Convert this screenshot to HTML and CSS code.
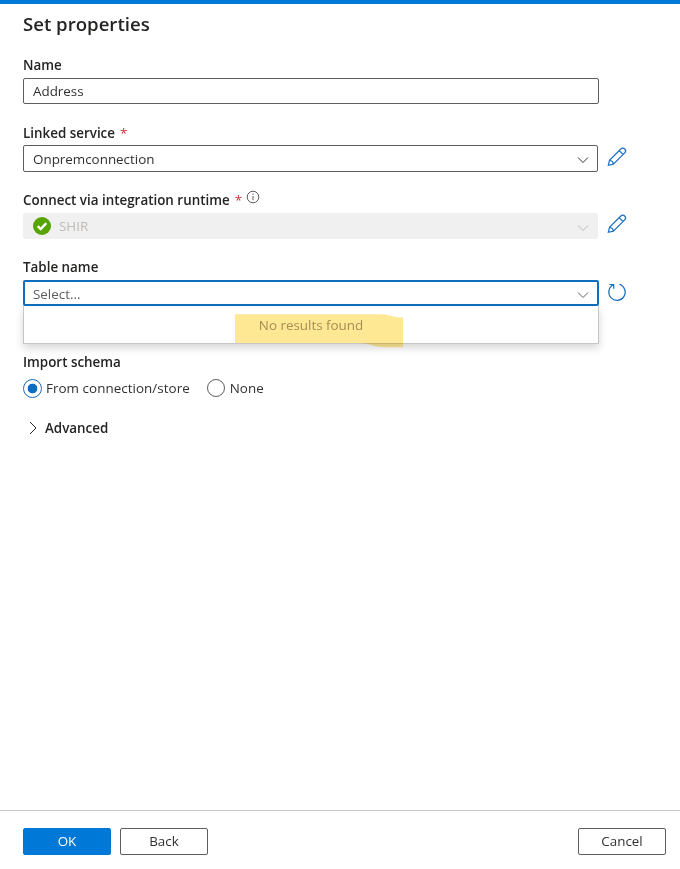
FILE: index.html
```
<!DOCTYPE html>
<html lang="en">
<head>
  <meta charset="UTF-8" />
  <meta name="viewport" content="width=device-width, initial-scale=1.0" />
  <title>Set properties</title>
  <link rel="stylesheet" href="styles.css">
</head>
<body>
  <div class="panel">
    <form class="content">
      <h2>Set properties</h2>

      <div class="field field-name">
        <label class="label">Name</label>
        <div class="row">
          <div class="box box-wide">Address</div>
        </div>
      </div>

      <div class="field field-service">
        <label class="label"><span>Linked service</span><span class="required">*</span></label>
        <div class="row">
          <div class="box">
            <span>Onpremconnection</span>
            <svg class="chevron" viewBox="0 0 12 8"><path d="M1 1.5l5 5 5-5" /></svg>
          </div>
          <svg class="icon" viewBox="0 0 20 20"><path d="M1.3 18.3l1.2-5L13.8 2a2.7 2.7 0 0 1 3.9 3.9L6.4 17.1zM2.5 13.3c2 .1 3.8 1.8 3.9 3.8M12.2 3.6l3.9 3.9" /></svg>
        </div>
      </div>

      <div class="field field-runtime">
        <label class="label">
          <span>Connect via integration runtime</span><span class="required">*</span>
          <svg class="info" viewBox="0 0 14 14"><circle cx="7" cy="7" r="5.8" /><path d="M7 6v4.2M7 3.6v1.2" /></svg>
        </label>
        <div class="row">
          <div class="box disabled">
            <svg class="check" viewBox="0 0 18 18"><circle cx="9" cy="9" r="9" /><path d="M4.7 9.1l3 3 5.6-6" /></svg>
            <span>SHIR</span>
            <svg class="chevron" viewBox="0 0 12 8"><path d="M1 1.5l5 5 5-5" /></svg>
          </div>
          <svg class="icon" viewBox="0 0 20 20"><path d="M1.3 18.3l1.2-5L13.8 2a2.7 2.7 0 0 1 3.9 3.9L6.4 17.1zM2.5 13.3c2 .1 3.8 1.8 3.9 3.8M12.2 3.6l3.9 3.9" /></svg>
        </div>
      </div>

      <div class="field field-table">
        <label class="label">Table name</label>
        <div class="row">
          <div class="box box-wide focused">
            <span>Select...</span>
            <svg class="chevron" viewBox="0 0 12 8"><path d="M1 1.5l5 5 5-5" /></svg>
          </div>
          <svg class="icon refresh" viewBox="0 0 20 20"><path d="M12.4 2.3a8.2 8.2 0 1 1-6.6.8M2.4 2.5h4.3v4.2" /></svg>
          <div class="dropdown">
            <span>No results found</span>
            <svg class="marker" viewBox="0 0 170 36"><path d="M1 1.2h146c9 .2 11 3.3 22 3.3v29.7h-20c-11-.6-12-4-24-4.2H1z" /></svg>
          </div>
        </div>
      </div>

      <div class="label">Import schema</div>
      <div class="radios">
        <span class="radio selected"></span>
        <span class="option">From connection/store</span>
        <span class="radio"></span>
        <span class="option">None</span>
      </div>

      <div class="advanced">
        <svg class="expand" viewBox="0 0 8 14"><path d="M1 1l6 6-6 6" /></svg>
        <span>Advanced</span>
      </div>
    </form>

    <div class="footer">
      <button class="primary">OK</button>
      <button>Back</button>
      <button class="cancel">Cancel</button>
    </div>
  </div>
</body>
</html>
```
FILE: styles.css
```
* {
  box-sizing: border-box;
}
body {
  margin: 0;
  background: #fff;
  color: #323130;
  font-family: "Open Sans", "Noto Sans", sans-serif;
  font-size: 13.4px;
  line-height: 20px;
}
span {
  white-space: nowrap;
}
svg {
  flex: none;
  fill: none;
  stroke: currentColor;
}
.panel {
  display: flex;
  flex-direction: column;
  height: 869px;
  border-top: 4px solid #0078d7;
}
.content {
  flex: 1;
  padding: 6px 23px 0;
}
h2 {
  height: 28px;
  margin: 0 0 17px;
  color: #252423;
  font-size: 18.6px;
  font-weight: 600;
  line-height: 28px;
}
.label {
  display: flex;
  height: 20px;
  color: #252423;
  font-weight: 600;
}
.field {
  display: flex;
  flex-direction: column;
  gap: 3px;
  margin-bottom: 18px;
}
.field-name {
  margin-bottom: 19px;
}
.field-service {
  gap: 2px;
}
.field-table {
  margin-bottom: 46px;
}
.required {
  margin-left: 5px;
  color: #d13438;
  font-weight: 400;
}
.info {
  width: 14px;
  height: 14px;
  margin-left: 4px;
  stroke: #605e5c;
}
.row {
  position: relative;
  display: flex;
}
.box {
  display: flex;
  align-items: center;
  width: 575px;
  height: 26px;
  padding: 0 8px 0 9px;
  border: 1px solid #605e5c;
  border-radius: 2px;
}
.box-wide {
  width: 576px;
}
.field-service .box {
  height: 27px;
}
.disabled {
  border-color: #f0f0f0;
  background: #f0f0f0;
  color: #bebbb8;
}
.focused {
  padding: 2px 8px 0;
  border: 2px solid #106ebe;
  color: #605e5c;
}
.chevron {
  width: 12px;
  height: 8px;
  margin: 3px 0 0 auto;
}
.focused .chevron {
  margin-top: 1px;
}
.check {
  width: 18px;
  height: 18px;
  margin-right: 8px;
}
.check circle {
  fill: #57a300;
  stroke: none;
}
.check path {
  stroke: #fff;
  stroke-width: 2.3;
}
.icon {
  width: 20px;
  height: 20px;
  margin: 2px 0 0 9px;
  color: #1b6ec2;
  stroke-width: 1.2;
}
.field-runtime .icon {
  margin-top: 1px;
}
.row .refresh {
  margin: 2px 0 0 8px;
}
.dropdown {
  position: absolute;
  top: 26px;
  left: 0;
  width: 576px;
  height: 38px;
  padding-top: 9px;
  border: 1px solid #c8c6c4;
  border-top: 0;
  background: #fff;
  box-shadow: 0 4px 8px rgba(0, 0, 0, 0.16);
  color: #a19d90;
  text-align: center;
}
.marker {
  position: absolute;
  top: 7px;
  left: 210px;
  width: 170px;
  height: 36px;
  fill: #ffe893;
  stroke: none;
  mix-blend-mode: multiply;
}
.radios {
  display: flex;
  align-items: center;
  height: 20px;
  margin-top: 6px;
}
.radio {
  width: 18px;
  height: 18px;
  margin-right: 5px;
  border: 1px solid #605e5c;
  border-radius: 50%;
}
.selected {
  width: 19px;
  height: 19px;
  margin-right: 4px;
  border-color: #106ebe;
  background: radial-gradient(circle, #106ebe 4.5px, transparent 5.2px);
}
.option {
  margin-right: 17px;
  letter-spacing: 0.05px;
}
.advanced {
  display: flex;
  align-items: center;
  height: 20px;
  margin: 20px 0 0 6px;
  color: #252423;
  font-weight: 600;
}
.expand {
  width: 8px;
  height: 14px;
  margin-right: 8px;
}
.footer {
  display: flex;
  gap: 9px;
  height: 59px;
  padding: 17px 14px 0 23px;
  border-top: 1px solid #c8c8c8;
}
button {
  width: 88px;
  height: 27px;
  padding: 0 0 2px;
  border: 1px solid #605e5c;
  border-radius: 2px;
  background: #fff;
  color: #323130;
  font: inherit;
}
.primary {
  border-color: #0078d7;
  background: #0078d7;
  color: #fff;
}
.cancel {
  margin-left: auto;
}
```
